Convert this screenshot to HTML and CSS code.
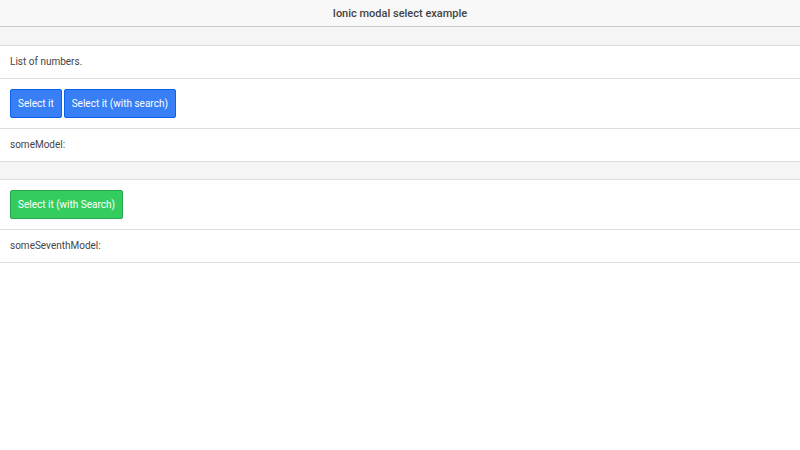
FILE: index.html
```html
<!DOCTYPE html>
<html lang="en">

<head>
  <meta charset="UTF-8" />
  <meta name="viewport" content="width=device-width, initial-scale=1.0" />
  <title>Ionic modal select example</title>
  <link rel="stylesheet" href="styles.css">
</head>

<body>
  <div class="bar-header">
    <h1 class="title">Ionic modal select example</h1>
  </div>

  <div class="list">
    <div class="item-divider"></div>
    <div class="item">List of numbers.</div>
    <div class="item item-buttons">
      <button class="button button-positive">Select it</button>
      <button class="button button-positive">Select it (with search)</button>
    </div>
    <div class="item">someModel: </div>

    <div class="item-divider"></div>
    <div class="item item-buttons">
      <button class="button button-balanced">Select it (with Search)</button>
    </div>
    <div class="item">someSeventhModel: </div>
  </div>
</body>

</html>
```

FILE: styles.css
```css
html,
body {
  margin: 0;
  padding: 0;
  background: #fff;
}

body {
  font-family: Roboto, "Liberation Sans", sans-serif;
  color: #444;
  font-size: 10px;
}

.bar-header {
  height: 26px;
  background-color: #f8f8f8;
  border-bottom: 1px solid #c8c8c8;
  display: flex;
  align-items: center;
  justify-content: center;
}

.bar-header .title {
  margin: 0;
  font-size: 11px;
  font-weight: 500;
  color: #444;
}

.item-divider {
  height: 17px;
  background-color: #f5f5f5;
  border-bottom: 1px solid #ddd;
}

.list .item-divider:first-child {
  height: 18px;
}

.item {
  padding: 10px;
  line-height: 12px;
  border-bottom: 1px solid #ddd;
}

.item-buttons {
  display: flex;
  gap: 2px;
}

.button {
  font-family: inherit;
  font-size: 10px;
  height: 29px;
  padding: 0 7px;
  border-radius: 2px;
  color: #fff;
  cursor: pointer;
}

.button-positive {
  background-color: #387ef5;
  border: 1px solid #0c60ee;
}

.button-balanced {
  background-color: #33cd5f;
  border: 1px solid #28a54c;
}
```
